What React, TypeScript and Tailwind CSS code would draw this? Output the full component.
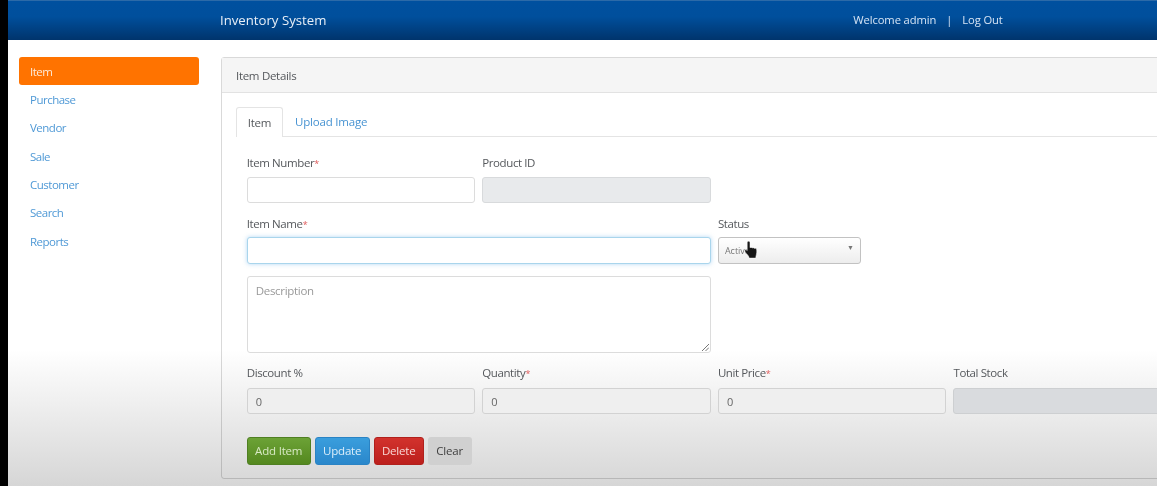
const navItems = ['Purchase', 'Vendor', 'Sale', 'Customer', 'Search', 'Reports'];

const Label = ({ text, required }: { text: string; required?: boolean }) => (
  <label className="block h-[17px] text-[11.5px] leading-[17px] tracking-[-0.4px] text-[#55585c]">
    {text}
    {required && <span className="text-[9px] text-[#e05a5a]">*</span>}
  </label>
);

const Field = ({ value, className }: { value?: string; className: string }) => (
  <div className={`h-[26px] rounded-[3px] border px-2 text-[11px] leading-[25px] text-[#666] ${className}`}>{value}</div>
);

const HandCursor = () => (
  <svg viewBox="0 0 14 20" className="absolute left-[25px] top-[2px] h-[20px] w-[14px]">
    <path
      d="M4.6 1.2c.9 0 1.4.6 1.4 1.5v5c.8-.5 1.8-.4 2.3.2.8-.4 1.7-.2 2.2.5.9-.3 2 .2 2.2 1.3.2 1.6.1 3.5-.4 5.2-.3 1-.5 1.9-.5 3.2H5.2c-.3-1.5-1-2.6-2.2-3.9C2 13 1 11.9.8 10.9c-.1-.9.8-1.4 1.6-1l.8.6V2.7c0-.9.5-1.5 1.4-1.5z"
      fill="#151515"
      stroke="#fff"
      strokeWidth="0.5"
    />
  </svg>
);

export default function App() {
  return (
    <div className="flex h-[486px] w-full overflow-hidden bg-black font-['Open_Sans',sans-serif] blur-[0.4px]">
      <div className="w-2 shrink-0" />
      <div className="flex min-w-0 flex-1 flex-col bg-[linear-gradient(to_bottom,#ffffff_0%,#ffffff_72%,#d6d6d6_100%)]">
        <header className="flex h-10 shrink-0 items-center border-t border-t-[#2c6aa8] bg-[linear-gradient(to_bottom,#00509f_0%,#004f9c_40%,#00346c_100%)] pl-[212px] text-[#d6e4f4]">
          <span className="text-[13.2px] text-[#e8eff7]">Inventory System</span>
          <span className="ml-[527px] text-[11.2px] tracking-[-0.1px]">Welcome admin</span>
          <span className="mx-[10px] text-[11px]">|</span>
          <span className="text-[11.2px] tracking-[-0.1px]">Log Out</span>
        </header>

        <div className="flex gap-[22px] pl-[11px] pt-[17px]">
          <nav className="w-[180px] shrink-0 text-[11.5px] tracking-[-0.5px]">
            <div className="flex h-[28px] items-center rounded-[3px] bg-[#ff7300] pl-[11px] pt-[1px] text-[#fdebd9]">Item</div>
            {navItems.map((item) => (
              <div key={item} className="flex h-[28.3px] items-center pl-[11px] pt-[1px] text-[#4f99d6]">
                {item}
              </div>
            ))}
          </nav>

          <section className="h-[422px] w-[1000px] shrink-0 rounded-[3px] border border-black/15">
            <div className="flex h-[35px] items-center border-b border-[#e2e2e2] bg-[#f5f5f5] pl-[14px] pt-[1px] text-[11.5px] tracking-[-0.3px] text-[#55585c]">
              Item Details
            </div>

            <div className="px-[14px] pt-[14px]">
              <div className="flex h-[30px] border-b border-[#e4e4e4] text-[11.5px] tracking-[-0.2px]">
                <div className="flex h-[30px] w-[47px] items-center justify-center rounded-t-[3px] border border-b-0 border-[#e4e4e4] bg-white pt-[1px] text-[#55585c]">
                  Item
                </div>
                <div className="flex items-center pl-[12px] pt-[1px] text-[#4793d2]">Upload Image</div>
              </div>
            </div>

            <div className="pl-[24.7px] pt-[17px]">
              <div className="grid grid-cols-[228.6px_228.6px_228.6px_228.6px] gap-x-[7px]">
                <div>
                  <Label text="Item Number" required />
                  <Field className="mt-[6px] border-[#dcdcdc] bg-white" />
                </div>
                <div>
                  <Label text="Product ID" />
                  <Field className="mt-[6px] border-[#d8dadc] bg-[#e8eaec]" />
                </div>
              </div>

              <div className="mt-[12px] grid grid-cols-[464.2px_143px] gap-x-[7px]">
                <div>
                  <Label text="Item Name" required />
                  <div className="mt-[5px] h-[27px] rounded-[3px] border border-[#a9d5ec] bg-white shadow-[0_0_4px_rgba(102,175,233,0.5)]" />
                </div>
                <div>
                  <Label text="Status" />
                  <div className="relative mt-[5px] flex h-[27px] items-center rounded-[3px] border border-[#c2c2c2] bg-[linear-gradient(to_bottom,#ffffff,#ededed)] pl-[6px] text-[9px] text-[#777]">
                    Active
                    <HandCursor />
                    <span className="absolute right-[6px] top-[5px] text-[7px] leading-[9px] text-[#777]">▼</span>
                  </div>
                </div>
              </div>

              <div className="relative mt-[12px] h-[77px] w-[464.2px] rounded-[3px] border border-[#dcdcdc] bg-white px-2 pt-[5px] text-[11.5px] tracking-[-0.3px] text-[#999]">
                Description
                <svg viewBox="0 0 8 8" className="absolute bottom-[1px] right-[1px] h-2 w-2">
                  <path d="M1 8L8 1M4.5 8L8 4.5" stroke="#777" strokeWidth="1" />
                </svg>
              </div>

              <div className="mt-[11px] grid grid-cols-[228.6px_228.6px_228.6px_228.6px] gap-x-[7px]">
                <div>
                  <Label text="Discount %" />
                  <Field value="0" className="mt-[7px] border-[#d2d2d2] bg-[#efefef]" />
                </div>
                <div>
                  <Label text="Quantity" required />
                  <Field value="0" className="mt-[7px] border-[#d2d2d2] bg-[#efefef]" />
                </div>
                <div>
                  <Label text="Unit Price" required />
                  <Field value="0" className="mt-[7px] border-[#d2d2d2] bg-[#efefef]" />
                </div>
                <div>
                  <Label text="Total Stock" />
                  <Field className="mt-[7px] border-[#cdcfd1] bg-[#d9dbde]" />
                </div>
              </div>

              <div className="mt-[23px] flex gap-[4px] text-[11.5px] tracking-[-0.2px]">
                <button className="h-[28px] w-[64px] rounded-[3px] border border-[#4f7f22] bg-[linear-gradient(to_bottom,#6ca236,#54881f)] text-[#d8e9c4]">
                  Add Item
                </button>
                <button className="h-[28px] w-[55px] rounded-[3px] border border-[#2a83c4] bg-[linear-gradient(to_bottom,#3a9edd,#2a87cb)] text-[#dceefa]">
                  Update
                </button>
                <button className="h-[28px] w-[50px] rounded-[3px] border border-[#b0201c] bg-[linear-gradient(to_bottom,#d2322d,#bc1f1c)] text-[#f8d8d6]">
                  Delete
                </button>
                <button className="h-[28px] w-[44px] rounded-[3px] bg-[#d0d0d0] text-[#404040]">Clear</button>
              </div>
            </div>
          </section>
        </div>
      </div>
    </div>
  );
}
